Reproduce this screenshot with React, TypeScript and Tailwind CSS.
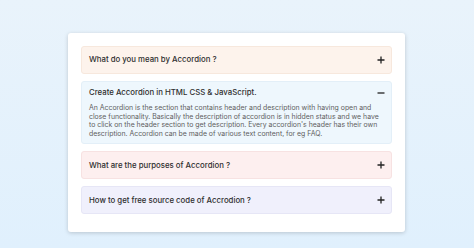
import React from "react";

const items = [
  { q: "What do you mean by Accordion ?", bg: "bg-[#fdf3ec]", border: "border-[#f7e8dd]", open: false },
  { q: "Create Accordion in HTML CSS & JavaScript.", bg: "bg-[#eef7fd]", border: "border-[#e3eff8]", open: true },
  { q: "What are the purposes of Accordion ?", bg: "bg-[#fdefef]", border: "border-[#f7e2e2]", open: false },
  { q: "How to get free source code of Accrodion ?", bg: "bg-[#f0f0fc]", border: "border-[#e6e6f6]", open: false },
];

const lines = [
  "An Accordion is the section that contains header and description with having open and",
  "close functionality. Basically the description of accordion is in hidden status and we have",
  "to click on the header section to get description. Every accordion's header has their own",
  "description. Accordion can be made of various text content, for eg FAQ.",
];

function Plus() {
  return (
    <svg width="8" height="8" viewBox="0 0 8 8" className="shrink-0">
      <path d="M4 0.5V7.5M0.5 4H7.5" stroke="#222" strokeWidth="1.3" />
    </svg>
  );
}
function Minus() {
  return (
    <svg width="8" height="8" viewBox="0 0 8 8" className="shrink-0">
      <path d="M0.5 4H7.5" stroke="#222" strokeWidth="1.3" />
    </svg>
  );
}

export default function App() {
  return (
    <div
      className="w-[474px] h-[248px] bg-gradient-to-b from-[#e9f3fb] to-[#e0f0fd] pt-[33px] pl-[68px]"
      style={{ fontFamily: "Inter, 'Liberation Sans', sans-serif" }}
    >
      <div className="w-[337px] h-[199px] bg-white rounded-[3px] shadow-[0_1px_4px_rgba(0,0,0,0.18)] px-[13px] pt-[13px] flex flex-col gap-[7px]">
        {items.map((it, i) => (
          <div key={i} className={`${it.bg} border ${it.border} rounded-[3px]`}>
            <div className={`${it.open ? "h-[21px] pt-[1px]" : "h-[26px]"} flex items-center justify-between pl-[7px] pr-[6px]`}>
              <span className="text-[7.8px] font-medium text-[#2e2e2e]">{it.q}</span>
              {it.open ? <Minus /> : <Plus />}
            </div>
            {it.open && (
              <div className="px-[7px] pt-[1px] pb-[5px] text-[6.9px] leading-[8.6px] text-[#5e5e5e]">
                {lines.map((l, j) => (
                  <div key={j} className="whitespace-nowrap">{l}</div>
                ))}
              </div>
            )}
          </div>
        ))}
      </div>
    </div>
  );
}
